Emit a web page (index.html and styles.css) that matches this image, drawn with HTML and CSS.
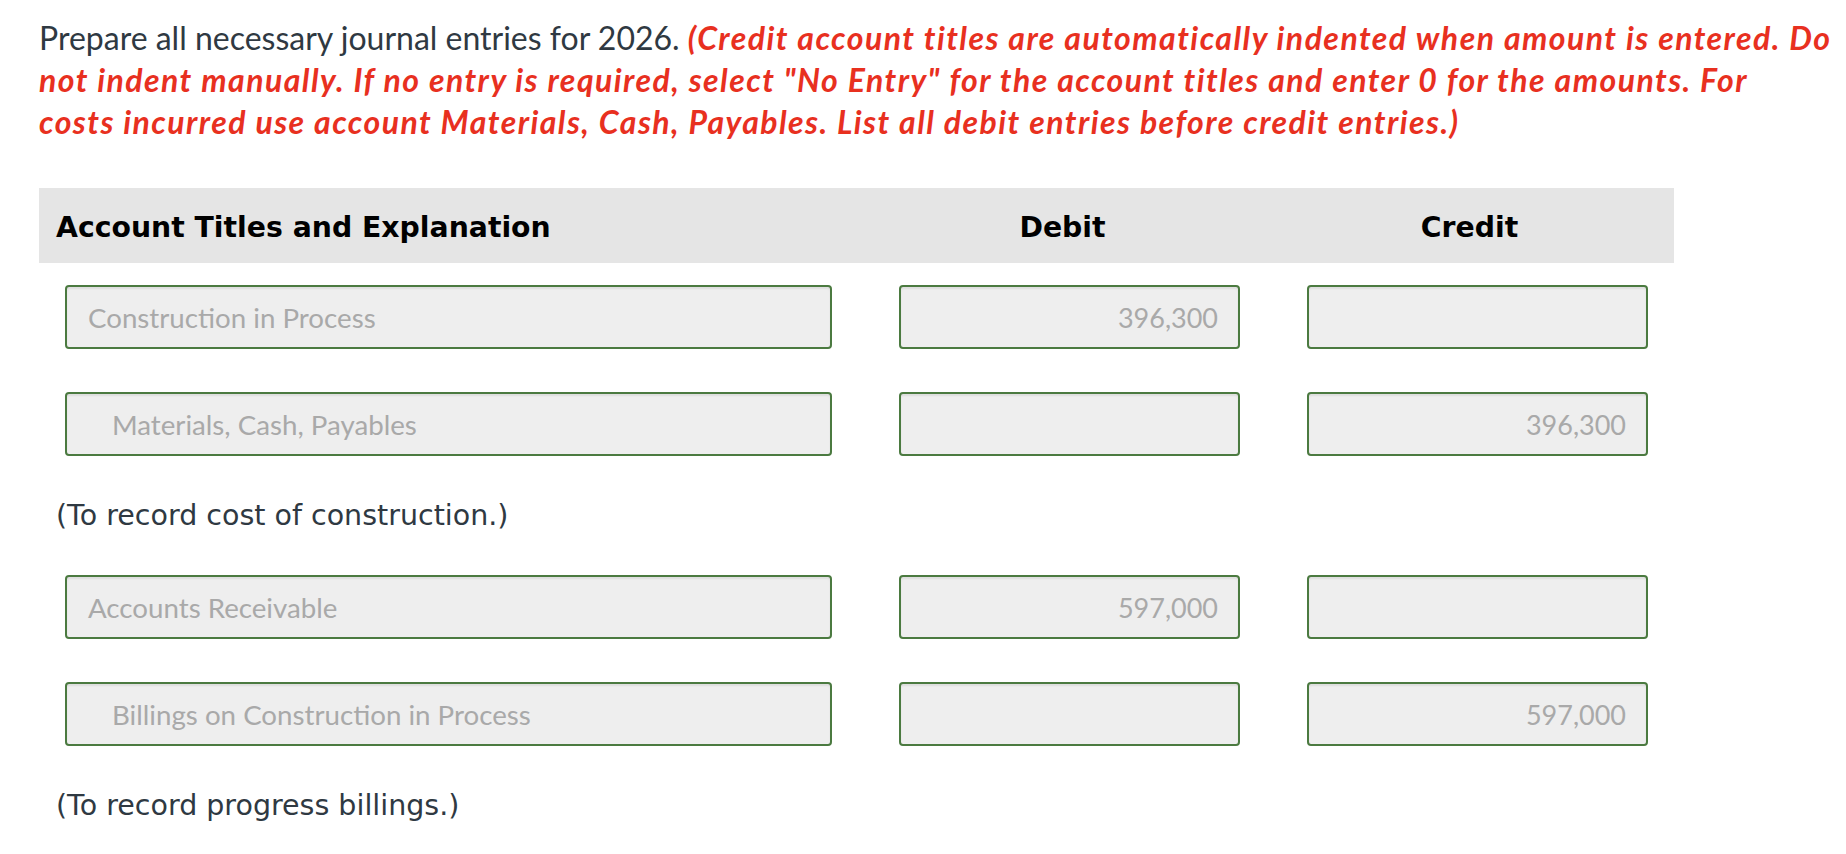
FILE: index.html
```html
<!DOCTYPE html>
<html>
<head>
<meta charset="utf-8">
<link rel="stylesheet" href="styles.css">
</head>
<body>
<div class="page">
  <p class="intro">Prepare all necessary journal entries for 2026. <span class="warn">(Credit account titles are automatically indented when amount is entered. Do not indent manually. If no entry is required, select "No Entry" for the account titles and enter 0 for the amounts. For<br>costs incurred use account Materials, Cash, Payables. List all debit entries before credit entries.)</span></p>

  <div class="journal">
    <div class="head">
      <div class="h-acct">Account Titles and Explanation</div>
      <div class="h-num h-debit">Debit</div>
      <div class="h-num h-credit">Credit</div>
    </div>

    <div class="row">
      <div class="cell-acct"><div class="field">Construction in Process</div></div>
      <div class="cell-debit"><div class="field num">396,300</div></div>
      <div class="cell-credit"><div class="field num"></div></div>
    </div>
    <div class="row">
      <div class="cell-acct"><div class="field indent">Materials, Cash, Payables</div></div>
      <div class="cell-debit"><div class="field num"></div></div>
      <div class="cell-credit"><div class="field num">396,300</div></div>
    </div>
    <div class="explain">(To record cost of construction.)</div>

    <div class="row">
      <div class="cell-acct"><div class="field">Accounts Receivable</div></div>
      <div class="cell-debit"><div class="field num">597,000</div></div>
      <div class="cell-credit"><div class="field num"></div></div>
    </div>
    <div class="row">
      <div class="cell-acct"><div class="field indent">Billings on Construction in Process</div></div>
      <div class="cell-debit"><div class="field num"></div></div>
      <div class="cell-credit"><div class="field num">597,000</div></div>
    </div>
    <div class="explain">(To record progress billings.)</div>
  </div>
</div>
</body>
</html>
```

FILE: styles.css
```css
html, body {
  margin: 0;
  padding: 0;
  background: #ffffff;
}
.page {
  padding: 17px 0 0 39px;
  width: 1800px;
  font-family: Lato, "Liberation Sans", sans-serif;
}
.intro {
  margin: 0;
  font-size: 32px;
  line-height: 42px;
  color: #2f3942;
}
.warn {
  color: #e8301f;
  font-weight: bold;
  font-style: italic;
  letter-spacing: 1.45px;
}
.journal {
  margin-top: 45px;
  width: 1635px;
}
.head {
  display: grid;
  grid-template-columns: 827px 407px 401px;
  height: 75px;
  align-items: center;
  background: #e5e5e5;
  font-family: "DejaVu Sans", Verdana, sans-serif;
  font-size: 28.3px;
  font-weight: bold;
  color: #000;
}
.h-acct {
  padding-left: 17px;
  padding-top: 3px;
}
.h-num {
  text-align: center;
  padding-top: 3px;
}
.h-debit {
  padding-right: 14px;
}
.h-credit {
  padding-right: 8px;
}
.row {
  display: grid;
  grid-template-columns: 827px 407px 401px;
  padding: 22px 0 21px;
}
.cell-acct {
  padding: 0 34px 0 26px;
}
.cell-debit {
  padding: 0 33px;
}
.cell-credit {
  padding: 0 26px 0 34px;
}
.field {
  box-sizing: border-box;
  height: 64px;
  border: 2px solid #4b7a40;
  border-radius: 4px;
  background: #eeeeee;
  box-shadow: inset 0 2px 2px rgba(0,0,0,0.07);
  display: flex;
  align-items: center;
  padding: 0 20px 0 21px;
  font-size: 27.7px;
  color: #a9a9a9;
  white-space: nowrap;
}
.field.indent {
  padding-left: 45px;
}
.field.num {
  justify-content: flex-end;
  font-size: 27px;
}
.explain {
  padding-left: 17px;
  height: 76px;
  display: flex;
  align-items: center;
  font-family: "DejaVu Sans", Verdana, sans-serif;
  font-size: 28.5px;
  color: #2f3942;
}
```
